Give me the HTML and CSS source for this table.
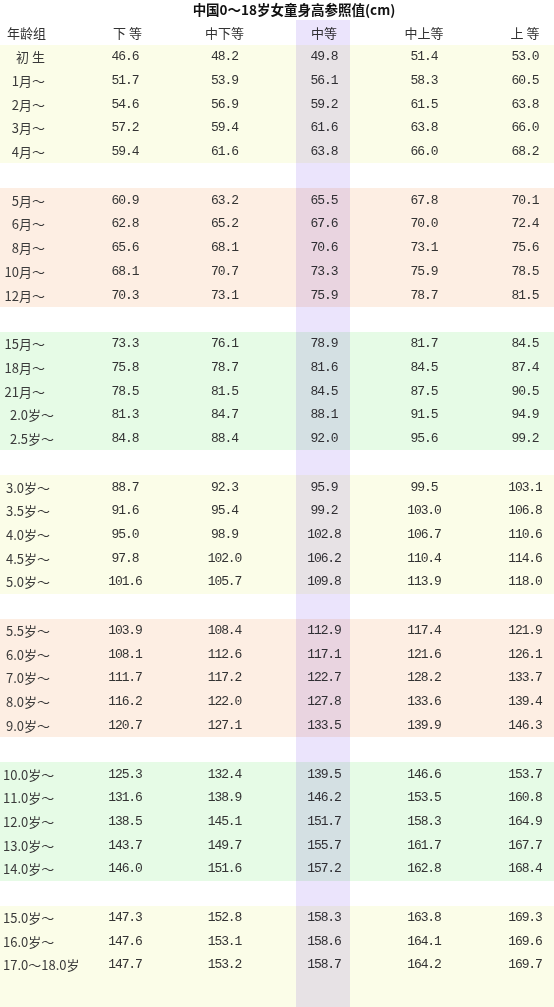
FILE: index.html
```html
<!DOCTYPE html>
<html lang="zh">
<head>
<meta charset="utf-8">
<title>中国0~18岁女童身高参照值(cm)</title>
<link rel="stylesheet" href="styles.css">
</head>
<body>
<div class="sheet">
  <div class="title">中国0～18岁女童身高参照值(cm)</div>
  <div class="row head">
    <div class="lab">年龄组</div>
    <div>下 等</div>
    <div>中下等</div>
    <div>中等</div>
    <div>中上等</div>
    <div class="last">上 等</div>
  </div>

  <div class="sec y">
    <div class="row"><div class="lab m">初 生</div><div class="n">46.6</div><div class="n">48.2</div><div class="n">49.8</div><div class="n">51.4</div><div class="n last">53.0</div></div>
    <div class="row"><div class="lab m">1月～</div><div class="n">51.7</div><div class="n">53.9</div><div class="n">56.1</div><div class="n">58.3</div><div class="n last">60.5</div></div>
    <div class="row"><div class="lab m">2月～</div><div class="n">54.6</div><div class="n">56.9</div><div class="n">59.2</div><div class="n">61.5</div><div class="n last">63.8</div></div>
    <div class="row"><div class="lab m">3月～</div><div class="n">57.2</div><div class="n">59.4</div><div class="n">61.6</div><div class="n">63.8</div><div class="n last">66.0</div></div>
    <div class="row"><div class="lab m">4月～</div><div class="n">59.4</div><div class="n">61.6</div><div class="n">63.8</div><div class="n">66.0</div><div class="n last">68.2</div></div>
  </div>

  <div class="sec p">
    <div class="row"><div class="lab m">5月～</div><div class="n">60.9</div><div class="n">63.2</div><div class="n">65.5</div><div class="n">67.8</div><div class="n last">70.1</div></div>
    <div class="row"><div class="lab m">6月～</div><div class="n">62.8</div><div class="n">65.2</div><div class="n">67.6</div><div class="n">70.0</div><div class="n last">72.4</div></div>
    <div class="row"><div class="lab m">8月～</div><div class="n">65.6</div><div class="n">68.1</div><div class="n">70.6</div><div class="n">73.1</div><div class="n last">75.6</div></div>
    <div class="row"><div class="lab m">10月～</div><div class="n">68.1</div><div class="n">70.7</div><div class="n">73.3</div><div class="n">75.9</div><div class="n last">78.5</div></div>
    <div class="row"><div class="lab m">12月～</div><div class="n">70.3</div><div class="n">73.1</div><div class="n">75.9</div><div class="n">78.7</div><div class="n last">81.5</div></div>
  </div>

  <div class="sec g">
    <div class="row"><div class="lab m">15月～</div><div class="n">73.3</div><div class="n">76.1</div><div class="n">78.9</div><div class="n">81.7</div><div class="n last">84.5</div></div>
    <div class="row"><div class="lab m">18月～</div><div class="n">75.8</div><div class="n">78.7</div><div class="n">81.6</div><div class="n">84.5</div><div class="n last">87.4</div></div>
    <div class="row"><div class="lab m">21月～</div><div class="n">78.5</div><div class="n">81.5</div><div class="n">84.5</div><div class="n">87.5</div><div class="n last">90.5</div></div>
    <div class="row"><div class="lab s">2.0岁～</div><div class="n">81.3</div><div class="n">84.7</div><div class="n">88.1</div><div class="n">91.5</div><div class="n last">94.9</div></div>
    <div class="row"><div class="lab s">2.5岁～</div><div class="n">84.8</div><div class="n">88.4</div><div class="n">92.0</div><div class="n">95.6</div><div class="n last">99.2</div></div>
  </div>

  <div class="sec y">
    <div class="row"><div class="lab">3.0岁～</div><div class="n">88.7</div><div class="n">92.3</div><div class="n">95.9</div><div class="n">99.5</div><div class="n last">103.1</div></div>
    <div class="row"><div class="lab">3.5岁～</div><div class="n">91.6</div><div class="n">95.4</div><div class="n">99.2</div><div class="n">103.0</div><div class="n last">106.8</div></div>
    <div class="row"><div class="lab">4.0岁～</div><div class="n">95.0</div><div class="n">98.9</div><div class="n">102.8</div><div class="n">106.7</div><div class="n last">110.6</div></div>
    <div class="row"><div class="lab">4.5岁～</div><div class="n">97.8</div><div class="n">102.0</div><div class="n">106.2</div><div class="n">110.4</div><div class="n last">114.6</div></div>
    <div class="row"><div class="lab">5.0岁～</div><div class="n">101.6</div><div class="n">105.7</div><div class="n">109.8</div><div class="n">113.9</div><div class="n last">118.0</div></div>
  </div>

  <div class="sec p">
    <div class="row"><div class="lab">5.5岁～</div><div class="n">103.9</div><div class="n">108.4</div><div class="n">112.9</div><div class="n">117.4</div><div class="n last">121.9</div></div>
    <div class="row"><div class="lab">6.0岁～</div><div class="n">108.1</div><div class="n">112.6</div><div class="n">117.1</div><div class="n">121.6</div><div class="n last">126.1</div></div>
    <div class="row"><div class="lab">7.0岁～</div><div class="n">111.7</div><div class="n">117.2</div><div class="n">122.7</div><div class="n">128.2</div><div class="n last">133.7</div></div>
    <div class="row"><div class="lab">8.0岁～</div><div class="n">116.2</div><div class="n">122.0</div><div class="n">127.8</div><div class="n">133.6</div><div class="n last">139.4</div></div>
    <div class="row"><div class="lab">9.0岁～</div><div class="n">120.7</div><div class="n">127.1</div><div class="n">133.5</div><div class="n">139.9</div><div class="n last">146.3</div></div>
  </div>

  <div class="sec g">
    <div class="row"><div class="lab t">10.0岁～</div><div class="n">125.3</div><div class="n">132.4</div><div class="n">139.5</div><div class="n">146.6</div><div class="n last">153.7</div></div>
    <div class="row"><div class="lab t">11.0岁～</div><div class="n">131.6</div><div class="n">138.9</div><div class="n">146.2</div><div class="n">153.5</div><div class="n last">160.8</div></div>
    <div class="row"><div class="lab t">12.0岁～</div><div class="n">138.5</div><div class="n">145.1</div><div class="n">151.7</div><div class="n">158.3</div><div class="n last">164.9</div></div>
    <div class="row"><div class="lab t">13.0岁～</div><div class="n">143.7</div><div class="n">149.7</div><div class="n">155.7</div><div class="n">161.7</div><div class="n last">167.7</div></div>
    <div class="row"><div class="lab t">14.0岁～</div><div class="n">146.0</div><div class="n">151.6</div><div class="n">157.2</div><div class="n">162.8</div><div class="n last">168.4</div></div>
  </div>

  <div class="sec y end">
    <div class="row"><div class="lab t">15.0岁～</div><div class="n">147.3</div><div class="n">152.8</div><div class="n">158.3</div><div class="n">163.8</div><div class="n last">169.3</div></div>
    <div class="row"><div class="lab t">16.0岁～</div><div class="n">147.6</div><div class="n">153.1</div><div class="n">158.6</div><div class="n">164.1</div><div class="n last">169.6</div></div>
    <div class="row"><div class="lab t">17.0～18.0岁</div><div class="n">147.7</div><div class="n">153.2</div><div class="n">158.7</div><div class="n">164.2</div><div class="n last">169.7</div></div>
  </div>

  <div class="hl"></div>
</div>
</body>
</html>
```

FILE: styles.css
```css
html, body {
  margin: 0;
  padding: 0;
  background: #ffffff;
}

.sheet {
  position: relative;
  width: 554px;
  height: 1007px;
  overflow: hidden;
  color: #3a3a3a;
  font-family: "Noto Sans CJK SC", "Noto Sans", sans-serif;
  font-size: 13px;
}

.title {
  height: 20px;
  line-height: 18px;
  text-align: center;
  font-weight: bold;
  font-size: 13.5px;
  color: #111;
  padding-left: 34px;
}

.row {
  display: grid;
  grid-template-columns: 75px 100px 99px 100px 100px 1fr;
  height: 23.7px;
  align-items: center;
  text-align: center;
}

.row.head {
  height: 25px;
  color: #333;
}

.row.head > div:nth-child(2) { padding-left: 5px; }

.lab {
  text-align: left;
  padding-left: 6px;
  white-space: nowrap;
}

.lab.m {
  width: 45px;
  padding-left: 0;
  text-align: right;
}

.lab.s { padding-left: 10px; }
.lab.t { padding-left: 3px; }

.head .lab { padding-left: 7px; }

.n {
  font-family: "Liberation Mono", "DejaVu Sans Mono", monospace;
  font-size: 13px;
  letter-spacing: -1.1px;
  color: #333;
}

.last { padding-left: 22px; }

.sec { margin-bottom: 25px; }
.sec.end { margin-bottom: 0; padding-bottom: 30px; }

.y { background: #fbfde8; }
.p { background: #fdeee3; }
.g { background: #e6fbe6; }

.hl {
  position: absolute;
  top: 20px;
  bottom: 0;
  left: 296px;
  width: 54px;
  background: #ebe4fc;
  mix-blend-mode: multiply;
  pointer-events: none;
}
```
